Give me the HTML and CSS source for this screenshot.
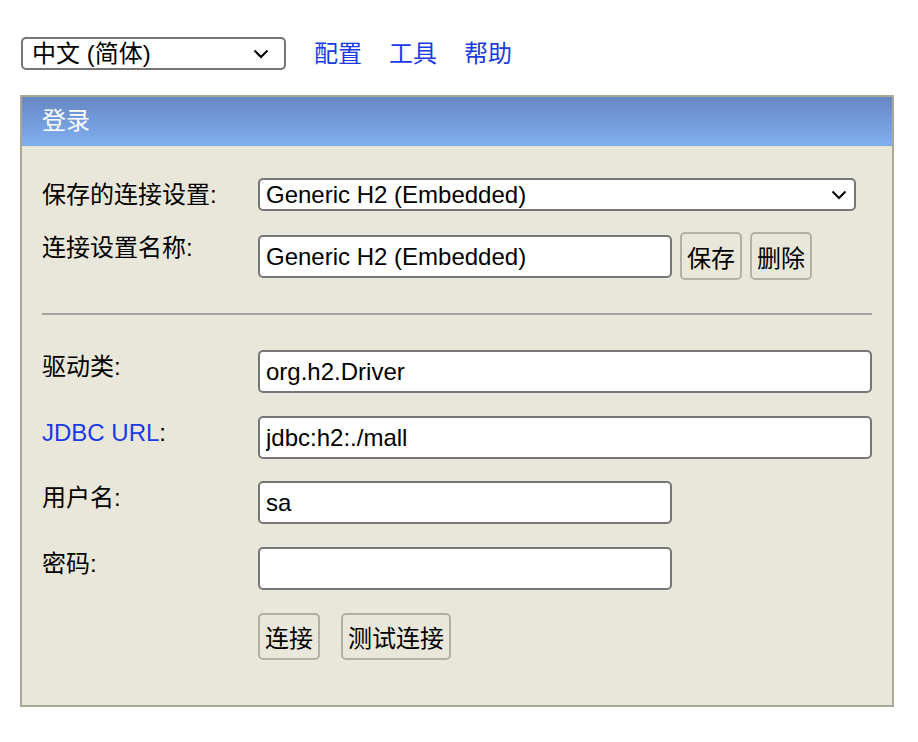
FILE: index.html
```html
<!DOCTYPE html>
<html lang="zh-CN">
<head>
    <meta charset="UTF-8">
    <title>H2 Console</title>
    <link rel="stylesheet" href="styles.css">
</head>
<body>
    <div class="toolbar">
        <select class="lang-select">
            <option>中文 (简体)</option>
        </select>
        <a class="nav-link" href="#">配置</a>
        <a class="nav-link" href="#">工具</a>
        <a class="nav-link" href="#">帮助</a>
    </div>

    <div class="login">
        <div class="login-title">登录</div>
        <div class="login-body">
            <div class="row row-setting">
                <label class="label">保存的连接设置:</label>
                <select class="field field-select">
                    <option>Generic H2 (Embedded)</option>
                </select>
            </div>
            <div class="row row-name">
                <label class="label">连接设置名称:</label>
                <input class="field field-short" type="text" value="Generic H2 (Embedded)">
                <button class="btn btn-small">保存</button>
                <button class="btn btn-small">删除</button>
            </div>

            <hr class="divider">

            <div class="row row-first">
                <label class="label">驱动类:</label>
                <input class="field field-wide" type="text" value="org.h2.Driver">
            </div>
            <div class="row row-url">
                <label class="label"><a class="help-link" href="#">JDBC URL</a>:</label>
                <input class="field field-wide" type="text" value="jdbc:h2:./mall">
            </div>
            <div class="row">
                <label class="label">用户名:</label>
                <input class="field field-short" type="text" value="sa">
            </div>
            <div class="row row-pwd">
                <label class="label">密码:</label>
                <input class="field field-short" type="password" value="">
            </div>
            <div class="row actions">
                <button class="btn">连接</button>
                <button class="btn">测试连接</button>
            </div>
        </div>
    </div>
</body>
</html>
```

FILE: styles.css
```css
body {
    margin: 0;
    padding: 37px 24px 0 20px;
    font-family: "Liberation Sans", "Noto Sans CJK SC", sans-serif;
    font-size: 24px;
    color: #000;
    background: #fff;
}

.toolbar {
    display: flex;
    align-items: center;
    height: 33px;
    line-height: 33px;
    padding-left: 1px;
}

select {
    appearance: none;
    -webkit-appearance: none;
    font: inherit;
    color: #000;
    background-color: #fff;
    background-image: url("data:image/svg+xml;utf8,<svg xmlns='http://www.w3.org/2000/svg' width='16' height='10' viewBox='0 0 16 10'><path d='M1.5 1.5 L8 8 L14.5 1.5' fill='none' stroke='black' stroke-width='2'/></svg>");
    background-repeat: no-repeat;
    border: 2px solid #767676;
    border-radius: 5px;
    box-sizing: border-box;
    height: 33px;
    line-height: normal;
    padding: 0 30px 0 9px;
}

.lang-select {
    width: 265px;
    margin-right: 28px;
    background-position: right 15px center;
}

.nav-link {
    color: #1a3ae6;
    text-decoration: none;
    margin-right: 27px;
}

.login {
    margin-top: 25px;
    width: 874px;
    box-sizing: border-box;
    border: 2px solid #aaa898;
    background: #e9e7da;
}

.login-title {
    height: 48px;
    line-height: 48px;
    padding-left: 20px;
    color: #fff;
    background: linear-gradient(#6687c4, #80aff0);
    border-bottom: 1px solid #7ea4d8;
}

.login-body {
    padding: 32px 20px 45px 20px;
}

.row {
    display: flex;
    align-items: flex-start;
    margin-top: 22px;
}

.row-setting,
.row-first {
    margin-top: 0;
}

.row-url,
.row-pwd,
.actions {
    margin-top: 23px;
}

.row-name {
    margin-top: 21px;
}

.label {
    width: 216px;
    flex: none;
    line-height: 28px;
    padding-top: 3px;
}

.row-name .label {
    padding-top: 2px;
}

.help-link {
    color: #1a3ae6;
    text-decoration: none;
}

.field {
    font: inherit;
    color: #000;
    box-sizing: border-box;
    height: 43px;
    border: 2px solid #767676;
    border-radius: 5px;
    background-color: #fff;
    padding: 0 6px;
    margin: 0;
}

.field-select {
    width: 598px;
    height: 33px;
    padding-left: 6px;
    background-position: right 7px center;
}

.field-wide {
    width: 614px;
}

.field-short {
    width: 414px;
}

.row-name .field {
    margin-top: 3px;
}

.btn {
    font: inherit;
    color: #000;
    height: 47px;
    padding: 0 5px;
    border: 2px solid #b2b0a4;
    border-radius: 5px;
    background: #e9e7da;
    margin: 0;
}

.btn-small {
    height: 48px;
    margin-left: 8px;
}

.divider {
    border: none;
    border-top: 2px solid #a3a3a0;
    margin: 33px 0 35px 0;
}

.actions {
    padding-left: 216px;
    gap: 21px;
}
```
